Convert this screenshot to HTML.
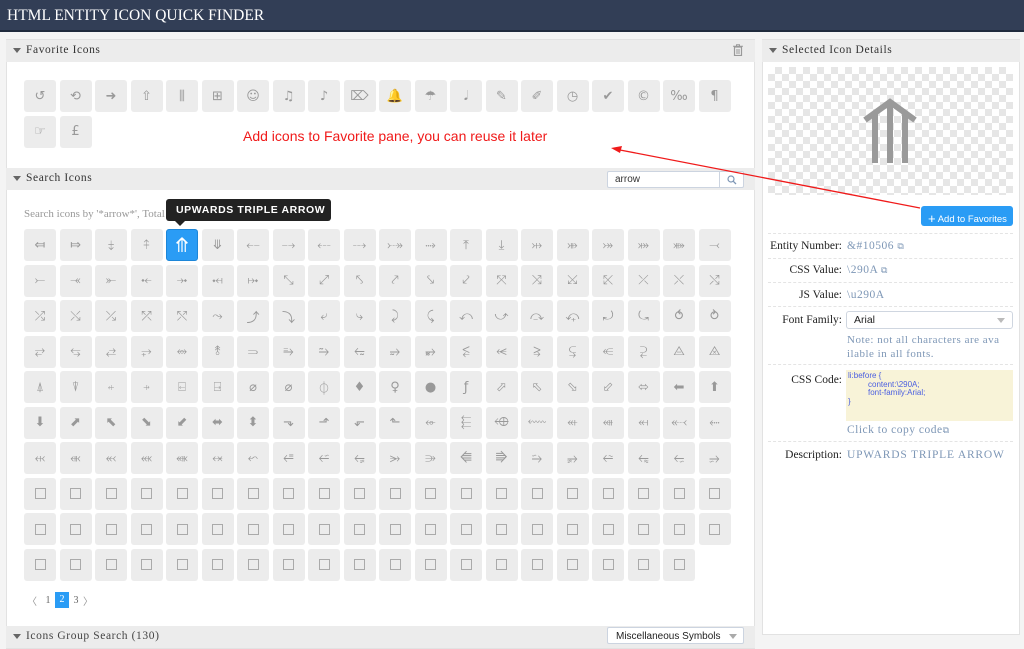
<!DOCTYPE html>
<html><head><meta charset="utf-8"><style>
*{box-sizing:border-box;margin:0;padding:0}
body{width:1024px;height:640px;overflow:hidden;background:#f4f4f4;font-family:"Liberation Serif","DejaVu Serif",serif;position:relative}
.hdr{position:absolute;left:0;top:0;width:1024px;height:32px;background:#323e56;border-bottom:2px solid #1f2a3c;color:#fff;font-size:15.5px;padding:7px 0 0 7px;letter-spacing:0}
.panel{position:absolute;background:#fff;border:1px solid #e2e2e2}
.ph{position:absolute;left:0;right:0;height:22px;background:#ececec;font-size:11.5px;color:#333;padding:4px 0 0 20px;letter-spacing:0.6px}
.ph:before{content:"";position:absolute;left:7px;top:8px;border:4px solid transparent;border-top:5px solid #666}
.grid{position:absolute;left:18px;display:flex;flex-wrap:wrap;width:730px;column-gap:3.5px;row-gap:3.5px}
.grid i{font-style:normal;width:32px;height:32px;background:#ececec;border-radius:3px;color:#999;font-family:"DejaVu Sans",sans-serif;font-size:13px;display:flex;align-items:center;justify-content:center}
.grid i.sel{background:#2a9cf5;color:#fff;font-size:20px;border:1px solid #1d86d8}
.grid i.sq:after{content:"";width:9px;height:9px;border:1.3px solid #aaa}
.lbl{position:absolute;font-size:11.5px;color:#222;text-align:right;width:80px;left:762px}
.val{position:absolute;font-size:11.5px;color:#7e97b6;left:847px;letter-spacing:0.5px}
.dash{position:absolute;left:768px;width:245px;border-top:1px dashed #e4e4e4}
</style></head><body>
<div class="hdr">HTML ENTITY ICON QUICK FINDER</div>

<div class="panel" style="left:6px;top:39px;width:749px;height:610px"></div>
<div class="ph" style="left:6px;right:269px;top:40px">Favorite Icons</div>
<svg style="position:absolute;left:733px;top:44px" width="10" height="12" viewBox="0 0 10 12"><rect x="1.5" y="3" width="7" height="8.5" fill="none" stroke="#999" stroke-width="1.2"/><path d="M0 2.2H10M3.5 2V0.7H6.5V2M4 5V10M6 5V10" stroke="#999" stroke-width="1" fill="none"/></svg>
<div class="grid" style="left:24px;top:80px">
<i>↺</i><i>⟲</i><i>➜</i><i>⇧</i><i>⫼</i><i>⊞</i><i>☺</i><i>♫</i><i>♪</i><i>⌦</i><i style="color:#d8a020">🔔</i><i>☂</i><i>𝅘𝅥</i><i>✎</i><i>✐</i><i>◷</i><i>✔</i><i>©</i><i>‰</i><i>¶</i><i>☞</i><i>£</i>
</div>
<div style="position:absolute;left:243px;top:128px;color:#f01a1a;font-family:'Liberation Sans',sans-serif;font-size:14px">Add icons to Favorite pane, you can reuse it later</div>

<div class="ph" style="left:6px;right:269px;top:168px">Search Icons</div>
<div style="position:absolute;left:607px;top:171px;width:137px;height:17px;background:#fff;border:1px solid #ccd4e0;border-radius:2px;font-family:'Liberation Sans',sans-serif;font-size:10px;padding:2px 0 0 7px;color:#333">arrow<span style="position:absolute;left:111px;top:0;width:1px;height:15px;background:#ccd4e0"></span><svg style="position:absolute;left:119px;top:3px" width="10" height="10" viewBox="0 0 10 10"><circle cx="4" cy="4" r="3" fill="none" stroke="#7e97b6" stroke-width="1.2"/><path d="M6.2 6.2L9 9" stroke="#7e97b6" stroke-width="1.3"/></svg></div>
<div style="position:absolute;left:24px;top:208px;font-size:11px;color:#999">Search icons by '*arrow*', Total</div>
<div style="position:absolute;left:166px;top:199px;width:165px;height:22px;background:#222;border-radius:3px;color:#fff;font-family:'Liberation Sans',sans-serif;font-weight:bold;font-size:10.5px;letter-spacing:0.6px;padding:5px 0 0 10px">UPWARDS TRIPLE ARROW</div>
<div style="position:absolute;left:175px;top:221px;border:5px solid transparent;border-top:5px solid #222"></div>
<div class="grid" style="left:24px;top:229px">
<i>⤆</i><i>⤇</i><i>⤈</i><i>⤉</i><i class="sel">⤊</i><i>⤋</i><i>⤌</i><i>⤍</i><i>⤎</i><i>⤏</i><i>⤐</i><i>⤑</i><i>⤒</i><i>⤓</i><i>⤔</i><i>⤕</i><i>⤖</i><i>⤗</i><i>⤘</i><i>⤙</i>
<i>⤚</i><i>⤛</i><i>⤜</i><i>⤝</i><i>⤞</i><i>⤟</i><i>⤠</i><i>⤡</i><i>⤢</i><i>⤣</i><i>⤤</i><i>⤥</i><i>⤦</i><i>⤧</i><i>⤨</i><i>⤩</i><i>⤪</i><i>⤫</i><i>⤬</i><i>⤭</i>
<i>⤮</i><i>⤯</i><i>⤰</i><i>⤱</i><i>⤲</i><i>⤳</i><i>⤴</i><i>⤵</i><i>⤶</i><i>⤷</i><i>⤸</i><i>⤹</i><i>⤺</i><i>⤻</i><i>⤼</i><i>⤽</i><i>⤾</i><i>⤿</i><i>⥀</i><i>⥁</i>
<i>⥂</i><i>⥃</i><i>⥄</i><i>⥅</i><i>⥈</i><i>⥉</i><i>⥰</i><i>⥱</i><i>⥲</i><i>⥳</i><i>⥴</i><i>⥵</i><i>⥶</i><i>⥷</i><i>⥸</i><i>⥹</i><i>⥺</i><i>⥻</i><i>⨺</i><i>⨻</i>
<i>⍋</i><i>⍒</i><i>⍅</i><i>⍆</i><i>⍇</i><i>⍈</i><i>⌀</i><i>⌀</i><i>⏀</i><i>♦</i><i>♀</i><i>●</i><i>ƒ</i><i>⬀</i><i>⬁</i><i>⬂</i><i>⬃</i><i>⬄</i><i>⬅</i><i>⬆</i>
<i>⬇</i><i>⬈</i><i>⬉</i><i>⬊</i><i>⬋</i><i>⬌</i><i>⬍</i><i>⬎</i><i>⬏</i><i>⬐</i><i>⬑</i><i>⬰</i><i>⬱</i><i>⬲</i><i>⬳</i><i>⬴</i><i>⬵</i><i>⬶</i><i>⬷</i><i>⬸</i>
<i>⬹</i><i>⬺</i><i>⬻</i><i>⬼</i><i>⬽</i><i>⬾</i><i>⬿</i><i>⭀</i><i>⭁</i><i>⭂</i><i>⭃</i><i>⭄</i><i>⭅</i><i>⭆</i><i>⭇</i><i>⭈</i><i>⭉</i><i>⭊</i><i>⭋</i><i>⭌</i>
<i class="sq"></i><i class="sq"></i><i class="sq"></i><i class="sq"></i><i class="sq"></i><i class="sq"></i><i class="sq"></i><i class="sq"></i><i class="sq"></i><i class="sq"></i><i class="sq"></i><i class="sq"></i><i class="sq"></i><i class="sq"></i><i class="sq"></i><i class="sq"></i><i class="sq"></i><i class="sq"></i><i class="sq"></i><i class="sq"></i>
<i class="sq"></i><i class="sq"></i><i class="sq"></i><i class="sq"></i><i class="sq"></i><i class="sq"></i><i class="sq"></i><i class="sq"></i><i class="sq"></i><i class="sq"></i><i class="sq"></i><i class="sq"></i><i class="sq"></i><i class="sq"></i><i class="sq"></i><i class="sq"></i><i class="sq"></i><i class="sq"></i><i class="sq"></i><i class="sq"></i>
<i class="sq"></i><i class="sq"></i><i class="sq"></i><i class="sq"></i><i class="sq"></i><i class="sq"></i><i class="sq"></i><i class="sq"></i><i class="sq"></i><i class="sq"></i><i class="sq"></i><i class="sq"></i><i class="sq"></i><i class="sq"></i><i class="sq"></i><i class="sq"></i><i class="sq"></i><i class="sq"></i><i class="sq"></i>
</div>
<div style="position:absolute;left:27px;top:592px;font-size:10px;color:#666;display:flex;align-items:center;gap:0">
<span style="width:14px;color:#999">〈</span><span style="width:14px;text-align:center">1</span><span style="width:14px;height:16px;background:#2a9cf5;color:#fff;text-align:center;padding-top:2px">2</span><span style="width:14px;text-align:center">3</span><span style="width:14px;color:#999">〉</span></div>
<div class="ph" style="left:6px;right:269px;top:626px;color:#444">Icons Group Search (130)</div>
<div style="position:absolute;left:607px;top:627px;width:137px;height:17px;background:#fff;border:1px solid #ccd4e0;border-radius:2px;font-family:'Liberation Sans',sans-serif;font-size:10px;padding:3px 0 0 8px;color:#222">Miscellaneous Symbols<span style="position:absolute;right:6px;top:6px;border:4px solid transparent;border-top:5px solid #aaa"></span></div>

<div class="panel" style="left:762px;top:39px;width:258px;height:596px"></div>
<div class="ph" style="left:762px;width:258px;top:40px">Selected Icon Details</div>
<div style="position:absolute;left:768px;top:67px;width:245px;height:128px;background-color:#fff;background-image:linear-gradient(45deg,#e6e6e6 25%,transparent 25%,transparent 75%,#e6e6e6 75%),linear-gradient(45deg,#e6e6e6 25%,transparent 25%,transparent 75%,#e6e6e6 75%);background-size:14px 14px;background-position:0 0,7px 7px"></div>
<svg style="position:absolute;left:862px;top:96px" width="60" height="70" viewBox="0 0 60 70"><path d="M3 24L28 6L53 24M13 17V67M28 7V67M43 17V67" stroke="#9a9a9a" stroke-width="6" fill="none"/></svg>
<div style="position:absolute;left:921px;top:206px;width:92px;height:20px;background:#2a9cf5;border-radius:3px;color:#fff;font-family:'Liberation Sans',sans-serif;font-size:9.5px;padding:4px 0 0 7px"><b style="font-size:13px;font-weight:normal;position:relative;top:1px">+</b> Add to Favorites</div>
<div class="dash" style="top:233px"></div>
<div class="lbl" style="top:240px">Entity Number:</div><div class="val" style="top:240px">&amp;#10506 <span style="font-size:9px">⧉</span></div>
<div class="dash" style="top:258px"></div>
<div class="lbl" style="top:264px">CSS Value:</div><div class="val" style="top:264px">\290A <span style="font-size:9px">⧉</span></div>
<div class="dash" style="top:282px"></div>
<div class="lbl" style="top:289px">JS Value:</div><div class="val" style="top:289px">\u290A</div>
<div class="dash" style="top:306px"></div>
<div class="lbl" style="top:314px">Font Family:</div>
<div style="position:absolute;left:846px;top:311px;width:167px;height:18px;border:1px solid #cfd6e0;border-radius:3px;background:#fff;font-family:'Liberation Sans',sans-serif;font-size:10.5px;padding:2px 0 0 7px;color:#222">Arial<span style="position:absolute;right:7px;top:6px;border:4px solid transparent;border-top:5px solid #bbb"></span></div>
<div class="val" style="top:333px;line-height:14px;width:170px;font-size:11px">Note: not all characters are ava<br>ilable in all fonts.</div>
<div class="dash" style="top:364px"></div>
<div class="lbl" style="top:374px">CSS Code:</div>
<div style="position:absolute;left:846px;top:370px;width:167px;height:51px;background:#f8f3d8;font-family:'Liberation Sans',sans-serif;font-size:8px;color:#4a5ee0;padding:2px 0 0 2px;line-height:8.5px">li:before {<br><span style="padding-left:20px">content:\290A;</span><br><span style="padding-left:20px">font-family:Arial;</span><br>}</div>
<div class="val" style="top:424px">Click to copy code<span style="font-size:9px">⧉</span></div>
<div class="dash" style="top:441px"></div>
<div class="lbl" style="top:449px">Description:</div><div class="val" style="top:449px;letter-spacing:0.8px">UPWARDS TRIPLE ARROW</div>

<svg style="position:absolute;left:0;top:0" width="1024" height="640"><line x1="620" y1="150" x2="920" y2="208" stroke="#f01a1a" stroke-width="1.3"/><path d="M611 148L622 146L620 153Z" fill="#f01a1a"/></svg>
</body></html>
